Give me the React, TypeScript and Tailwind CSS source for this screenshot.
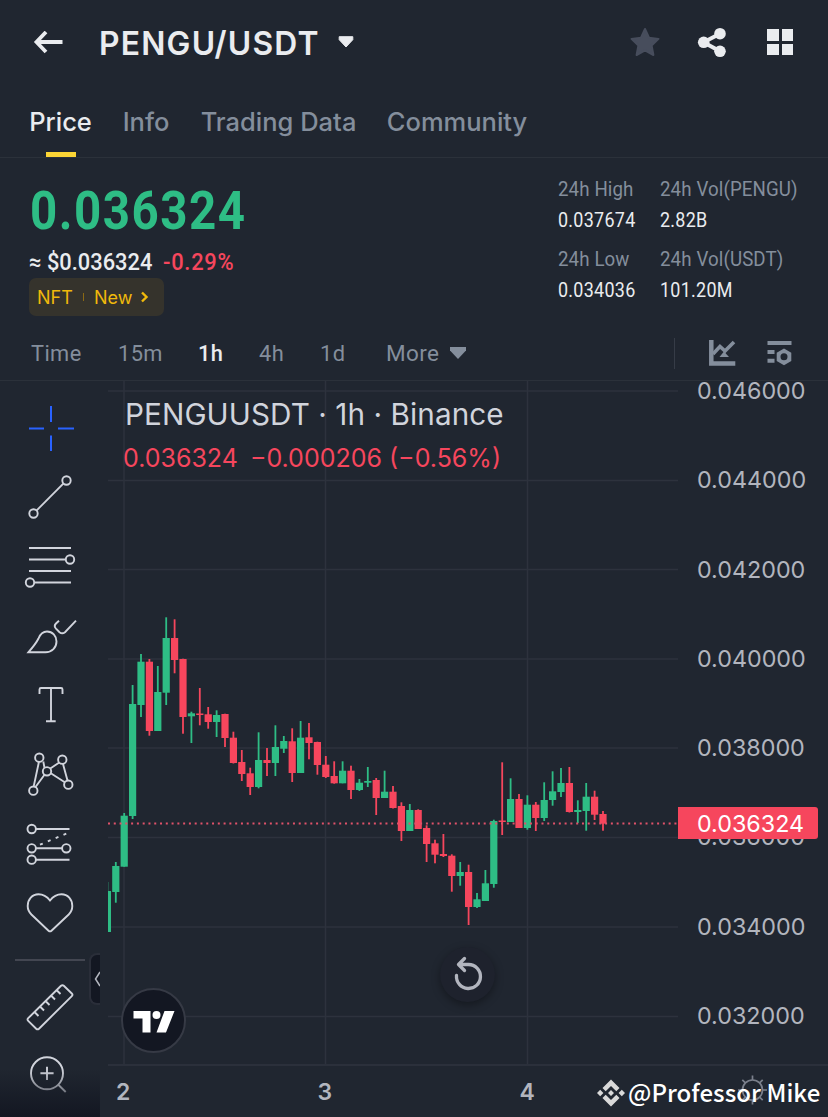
import type { ReactNode } from 'react'

type Candle = [high: number, top: number, bottom: number, low: number, up: 0 | 1]

const tabs = [
  { label: 'Price', width: 'w-[61px]', active: true },
  { label: 'Info', width: 'w-[50px]' },
  { label: 'Trading Data', width: 'w-[155px]' },
  { label: 'Community', width: 'w-[142px]' },
]

const stats = [
  { label: '24h High', value: '0.037674' },
  { label: '24h Vol(PENGU)', value: '2.82B' },
  { label: '24h Low', value: '0.034036' },
  { label: '24h Vol(USDT)', value: '101.20M' },
]

const intervals = [
  { label: 'Time', width: 'w-[87px]' },
  { label: '15m', width: 'w-[80px]' },
  { label: '1h', width: 'w-[61px]', active: true },
  { label: '4h', width: 'w-[61px]' },
  { label: '1d', width: 'w-[66px]' },
]

const prices = ['0.046000', '0.044000', '0.042000', '0.040000', '0.038000', '0.036000', '0.034000', '0.032000']
const gridY = [391, 480.5, 569.5, 659, 748, 837.5, 927, 1016.5]
const gridX = [124, 325.5, 527.5]

const candles: Candle[] = [
  [882, 891, 932, 932, 1],
  [862, 866, 892, 902.7, 1],
  [813, 815.7, 866.7, 866.7, 1],
  [685, 704, 816, 819, 1],
  [654, 661.7, 705, 717, 1],
  [659, 661.7, 731, 735.7, 0],
  [666, 692, 731, 731, 1],
  [617.3, 638, 692.7, 705, 1],
  [619.3, 638, 660, 673.3, 0],
  [658.7, 659, 717, 733.7, 0],
  [711.7, 713.3, 716.3, 743, 1],
  [688, 713.5, 715, 725.3, 0],
  [707, 714.3, 722, 728.7, 0],
  [710.3, 715, 722, 737, 1],
  [713.7, 714, 738, 747, 0],
  [731.7, 737.7, 763, 763.5, 0],
  [750, 762, 774, 781, 0],
  [767.7, 773.3, 787, 795, 0],
  [732.3, 760, 787, 788.3, 1],
  [748, 760, 763, 776, 0],
  [725.3, 747, 763, 776, 1],
  [736, 741, 748.7, 753, 1],
  [728.3, 741.3, 773, 782, 0],
  [721, 737.7, 773, 773, 1],
  [723, 737.3, 743, 759.3, 0],
  [741.7, 742, 765, 774.7, 0],
  [756, 764.7, 777, 778, 0],
  [761.3, 776, 783.3, 783.7, 0],
  [761.3, 770.7, 783.3, 783.3, 1],
  [765.7, 770.7, 790, 799, 0],
  [779, 782.7, 790, 791, 1],
  [767, 781, 782.7, 787, 1],
  [778, 780, 798, 815, 0],
  [770.7, 791.7, 798, 798, 1],
  [786, 791.7, 808, 808.5, 0],
  [802.3, 806, 831, 841, 0],
  [804, 810, 831, 831, 1],
  [809.3, 810, 829, 829, 0],
  [825.3, 828, 844, 862, 0],
  [839.7, 843.3, 854.7, 863.3, 0],
  [834, 854, 856, 857, 0],
  [854.3, 855.7, 876, 891.7, 0],
  [862, 872, 876, 885.7, 1],
  [864.7, 872, 907, 925, 0],
  [893, 899.3, 907, 908, 1],
  [870, 883.3, 901, 901, 1],
  [819.7, 821, 884, 887.7, 1],
  [762.3, 820.5, 822, 835, 0],
  [778.3, 799, 822, 822, 1],
  [794, 799, 828, 828, 0],
  [795.3, 804.7, 828, 829.7, 1],
  [802, 804.7, 818, 831, 0],
  [782.3, 800, 818, 821, 1],
  [771.3, 791.3, 800, 805.7, 1],
  [768, 783, 792, 797, 1],
  [767, 783, 812, 812.5, 0],
  [800.3, 810, 812, 823, 1],
  [783, 796.7, 811, 830.7, 1],
  [790.7, 796.7, 814.7, 820, 0],
  [811, 814, 823.7, 830.7, 0],
]

const tools: ReactNode[] = [
  <path stroke="#2962ff" strokeWidth="2" d="M51 12v16M51 41.500V57M29 34.500h15M58 34.500h16" />,
  <>
    <circle cx="66.500" cy="17.500" r="4.200" />
    <circle cx="33.500" cy="50.500" r="4.200" />
    <path d="M63.300 20.700 36.700 47.300" />
  </>,
  <>
    <path d="M29 16h42M29 27.500h36.500M29 39h42M34.500 50.500H71" />
    <circle cx="70" cy="27.500" r="4.200" />
    <circle cx="30" cy="50.500" r="4.200" />
  </>,
  <path d="M28.500 51.200C33 46 36.500 41.500 38.500 37.500 40.500 32.500 43 30.500 47 30.500c5.500 0 9.500 4.500 9.500 10 0 6-4.500 10.700-11 10.700ZM59 19.700l-3 2.800q-2.500 2.500 0 5.200l3.500 3.500q2.700 2.200 5.500 0L76 19.700" />,
  <path d="M39.500 24v-4.500q0-1.500 1.500-1.500h20q1.500 0 1.500 1.500V24M51 18v33.300M46 51.300h9.700" />,
  <>
    <path d="M38.900 23 33.700 47.400M43.300 22.500 44.500 28.800M35.500 48 44.500 35.800M50.300 29.500l9-6M50.800 34.300l14 9M63 25l4.500 16.500" />
    <circle cx="39.300" cy="18.700" r="4.200" />
    <circle cx="62.300" cy="20.700" r="4.200" />
    <circle cx="47" cy="32.300" r="4.200" />
    <circle cx="33.300" cy="51.700" r="4.200" />
    <circle cx="68.300" cy="45.700" r="4.200" />
  </>,
  <>
    <path d="M36 21h33.500M36 40.300h26M36 51.700h33.500" />
    <path strokeDasharray="3 5.500" d="M40 36.700l27-11.400" />
    <circle cx="31.700" cy="21" r="4.200" />
    <circle cx="31.700" cy="40.300" r="4.200" />
    <circle cx="66.300" cy="40.300" r="4.200" />
    <circle cx="31.700" cy="51.700" r="4.200" />
  </>,
  <path d="M50 23.500C46.500 19 43 17.300 38.500 17.300c-6.300 0-10.800 5-10.800 11.700 0 4 1.700 6.500 3.700 8.500L48.500 53.700q1.500 1.200 3 0L68.700 37.500c2-2 3.600-4.500 3.600-8.500 0-6.700-4.500-11.700-10.800-11.700-4.500 0-8 1.700-11.500 6.200Z" />,
]

const utilities: ReactNode[] = [
  <path d="M61 12.800q1.400-1.300 2.800 0l8 7.700q1.400 1.300 0 2.700L39 55.700q-1.400 1.300-2.800 0L28.200 47.900q-1.400-1.300 0-2.700ZM56.500 17l4 4M51 22.500l4 4M45.500 28l4 4M40 33.500l4 4M34.500 39l4 4" />,
  <path d="M63 31.300a16 16 0 1 1-32 0 16 16 0 1 1 32 0ZM47 24.700v13.200M40.400 31.300h13.200M58.300 42.800l7.400 7.200" />,
]

function Tool({ children }: { children: ReactNode }) {
  return (
    <svg className="h-[69px] w-[100px] shrink-0" viewBox="0 0 100 69" fill="none" stroke="#d1d4dc" strokeWidth="1.900">
      {children}
    </svg>
  )
}

function Header() {
  return (
    <header className="flex h-[86px] items-center">
      <svg className="ml-[32px] h-6 w-8" viewBox="0 0 32 24" fill="none" stroke="#eaecef" strokeWidth="3.800">
        <path d="M30.500 11H4.500M14 1 4.500 11l9.500 10" />
      </svg>
      <h1 className="ml-[35px] mt-[2px] w-[239px] origin-left scale-x-[0.965] whitespace-nowrap font-['Inter'] text-[33px] font-semibold tracking-[1.250px] text-[#eaecef]">
        PENGU/USDT
      </h1>
      <svg className="-mt-[2px] h-3 w-4" viewBox="0 0 16 12" fill="#eaecef">
        <path d="M1.200.7h13.600v3L8 11 1.200 3.700Z" stroke="#eaecef" strokeLinejoin="round" />
      </svg>
      <svg className="-mt-[2px] ml-[276px] h-8 w-8" viewBox="0 0 32 32" fill="#474d5c" stroke="#474d5c" strokeWidth="2" strokeLinejoin="round">
        <path d="m15 3 4 8.700 9.500 1.200-6.900 6.600 1.800 9.500-8.400-4.600L6.600 29l1.800-9.500L1.500 12.900l9.500-1.200Z" />
      </svg>
      <svg className="ml-[35px] h-8 w-8" viewBox="0 0 32 32" fill="#eaecef">
        <path d="M23 6.700 6.500 15.300 23 24.300" fill="none" stroke="#eaecef" strokeWidth="4" />
        <circle cx="6.700" cy="15.300" r="5.800" />
        <circle cx="23" cy="6.700" r="5.800" />
        <circle cx="23" cy="24.300" r="5.800" />
      </svg>
      <div className="-mt-[2px] ml-[38px] grid grid-cols-2 gap-[3px]">
        <i className="size-[11.5px] bg-[#eaecef]" />
        <i className="size-[11.5px] bg-[#eaecef]" />
        <i className="size-[11.5px] bg-[#eaecef]" />
        <i className="size-[11.5px] bg-[#eaecef]" />
      </div>
    </header>
  )
}

function Tabs() {
  return (
    <nav className="flex h-[72px] gap-[30px] border-b border-[#2b313a] pl-[30px] font-['Inter'] text-[25.500px] font-medium">
      {tabs.map((tab) => (
        <div key={tab.label} className={`flex flex-col items-center ${tab.width}`}>
          <span className={`mt-[17px] h-[37px] whitespace-nowrap leading-[37px] ${tab.active ? 'text-[#eaecef]' : 'text-[#848e9c]'}`}>
            {tab.label}
          </span>
          {tab.active && <i className="mt-[12px] h-[5px] w-[30px] bg-[#fcd535]" />}
        </div>
      ))}
    </nav>
  )
}

function Summary() {
  return (
    <section className="flex h-[168px] justify-between pl-[29px]">
      <div>
        <div className="ml-px mt-[22px] h-[62px] w-[230px] origin-left scale-x-[0.88] whitespace-nowrap font-['Roboto'] text-[54px] font-bold leading-[62px] tracking-[1.700px] text-[#2ebd85]">
          0.036324
        </div>
        <div className="mt-[6px] flex h-[30px] whitespace-nowrap font-['Roboto'] text-[23px] font-medium leading-[30px]">
          <span className="w-[134px] origin-left scale-x-[0.95] text-[#eaecef]">≈ $0.036324</span>
          <span className="origin-left scale-x-[0.95] tracking-[0.800px] text-[#f6465d]">-0.29%</span>
        </div>
        <div className="flex h-[38px] w-[135px] items-center rounded-[7px] bg-[#35332c] pl-2 font-['Inter'] text-[18px] text-[#f0b90b]">
          <span className="w-[46px]">NFT</span>
          <i className="mr-[10px] h-2 w-px bg-[#8b6914]" />
          <span className="w-[47px]">New</span>
          <svg className="h-3 w-2" viewBox="0 0 8 12" fill="none" stroke="#f0b90b" strokeWidth="2.400">
            <path d="m1 1.500 4.500 4.500L1 10.500" />
          </svg>
        </div>
      </div>
      <dl className="mt-[16px] grid h-[140px] w-[270px] grid-cols-[102px_1fr] font-['Roboto']">
        {stats.map((s) => (
          <div key={s.label} className="h-[69px] whitespace-nowrap">
            <dt className="h-[31px] origin-left scale-x-[0.96] text-[19.500px] leading-[31px] tracking-[0.100px] text-[#848e9c]">{s.label}</dt>
            <dd className="origin-left scale-x-[0.92] text-[19.500px] leading-[31px] tracking-[0.300px] text-[#eaecef]">{s.value}</dd>
          </div>
        ))}
      </dl>
    </section>
  )
}

function IntervalBar() {
  return (
    <div className="flex h-[55px] items-center border-b border-[#2b313a] pl-[31px] font-['Roboto'] text-[22.500px] tracking-[0.400px] text-[#848e9c]">
      {intervals.map((it) => (
        <span key={it.label} className={`origin-left scale-x-[0.97] pt-[2px] ${it.width} ${it.active ? 'font-medium text-[#eaecef]' : ''}`}>
          {it.label}
        </span>
      ))}
      <span className="w-[64px] pt-[2px]">More</span>
      <svg className="h-3 w-4" viewBox="0 0 16 12" fill="#848e9c">
        <path d="M0 0h16v3.500L8 12 0 3.500Z" />
      </svg>
      <i className="ml-[208px] h-[31px] w-px bg-[#363c47]" />
      <svg className="ml-[33px] h-7 w-7" viewBox="0 0 28 28" fill="none" stroke="#848e9c">
        <path strokeWidth="4.500" d="M3.300 1v23.500h24" />
        <path strokeWidth="3.600" d="M5 15 12 7.500l5 4.500 9-9" />
        <path fill="#848e9c" stroke="none" d="m16 12.500 5 5.500h-9.500Z" />
      </svg>
      <svg className="ml-[31px] h-7 w-7" viewBox="0 0 28 28" fill="#848e9c">
        <path d="M.5 2h24v4H.5ZM.5 11h7v4h-7ZM.5 19.700h7v4h-7Z" />
        <path fillRule="evenodd" d="m17 9.500 7.300 4.200v8.300L17 26.200 9.700 22v-8.300ZM17 14.300a3.500 3.500 0 1 0 0 7 3.500 3.500 0 0 0 0-7Z" />
      </svg>
    </div>
  )
}

function ToolRail() {
  return (
    <aside className="relative flex w-[100px] flex-col pt-[13px]">
      {tools.map((tool, i) => (
        <Tool key={i}>{tool}</Tool>
      ))}
      <div className="flex h-[27px] justify-center pt-[13px]">
        <i className="h-[2px] w-[70px] bg-[#434651]" />
      </div>
      {utilities.map((tool, i) => (
        <Tool key={i}>{tool}</Tool>
      ))}
      <div className="absolute bottom-0 left-0 h-12 w-full bg-gradient-to-b from-transparent to-[#131722]" />
      <div className="absolute right-0 top-[572px] flex h-[52px] w-[11px] items-center justify-end overflow-hidden rounded-l-lg border-2 border-r-0 border-[#2a2e39] bg-[#131722]">
        <svg className="h-4 w-[6px]" viewBox="0 0 6 16" fill="none" stroke="#b2b5be" strokeWidth="1.500">
          <path d="M6 1 1.500 8 6 15" />
        </svg>
      </div>
    </aside>
  )
}

function CandleChart() {
  return (
    <svg className="block h-[683px] w-[578px]" viewBox="100 381 578 683">
      <g stroke="#2d323d" strokeWidth="1.500">
        {gridY.map((y) => (
          <path key={y} d={`M108 ${y}H678`} />
        ))}
        {gridX.map((x) => (
          <path key={x} d={`M${x} 381V1064`} />
        ))}
      </g>
      <clipPath id="plot">
        <path d="M108 381h570v683H108Z" />
      </clipPath>
      <g clipPath="url(#plot)">
        {candles.map(([high, top, bottom, low, up], i) => {
          const x = 107.400 + i * 8.400
          return (
            <g key={i} fill={up ? '#2ebd85' : '#f6465d'}>
              <rect x={x - 0.900} y={high} width="1.800" height={low - high} />
              <rect x={x - 3.600} y={top} width="7.200" height={bottom - top} />
            </g>
          )
        })}
      </g>
      <path d="M108 823.500h570" stroke="#e0526a" strokeWidth="2" strokeDasharray="2 3.780" />
    </svg>
  )
}

function Legend() {
  return (
    <div className="absolute left-6 top-[13px] whitespace-nowrap font-['Inter']">
      <div className="ml-px h-10 text-[29.700px] leading-10 tracking-[0.070px] text-[#d1d4dc]">PENGUUSDT · 1h · Binance</div>
      <div className="-ml-px mt-[6px] flex h-9 gap-3 text-[25px] leading-9 text-[#f6465d]">
        <span>0.036324</span>
        <span>−0.000206 (−0.56%)</span>
      </div>
    </div>
  )
}

function PriceAxis() {
  return (
    <div className="relative flex h-[683px] w-[150px] flex-col gap-[69.300px] pl-[19px] font-['Inter'] text-[23.300px] leading-5 text-[#b2b5be]">
      {prices.map((p) => (
        <span key={p} className="h-5">{p}</span>
      ))}
      <div className="absolute left-0 top-[426px] h-8 w-[140px] rounded-r-[3px] bg-[#f6465d] pl-[19px] leading-[33px] text-white">
        0.036324
      </div>
    </div>
  )
}

function TimeAxis() {
  return (
    <div className="relative ml-2 flex h-[53px] border-t-2 border-[#2b303b] font-['Inter'] text-[23px] font-semibold leading-[53px] text-[#b2b5be]">
      <span className="ml-2 w-[201.500px]">2</span>
      <span className="w-[202px]">3</span>
      <span>4</span>
      <svg className="absolute left-[628px] top-[8px] h-8 w-8" viewBox="0 0 32 32" fill="none" stroke="#7b808c" strokeWidth="1.700">
        <circle cx="16.500" cy="16" r="10" />
        <path d="M16.500 1.500V6M16.500 26v4.500M2 16h4.500M26.500 16H31M6.300 5.800l3.100 3.100M23.600 23.100l3.100 3.100M6.300 26.200l3.100-3.100M23.600 8.900l3.100-3.100" />
      </svg>
      <div className="absolute left-[489px] top-[3px] flex items-center whitespace-nowrap font-['Noto_Sans_CJK_SC'] text-[24px] font-medium text-white">
        <svg className="mr-[3px] h-7 w-7" viewBox="0 0 28 28" fill="#d9d9d9">
          <path d="m14 .5 8.500 8.500-3.200 3.200L14 7l-5.300 5.200L5.500 9ZM14 27.500l8.500-8.500-3.200-3.200L14 21l-5.300-5.200L5.500 19ZM14 11l3 3-3 3-3-3ZM3.200 10.800 6.400 14l-3.200 3.200L0 14ZM24.800 10.800 28 14l-3.200 3.200-3.200-3.200Z" />
        </svg>
        <span className="-mt-[2px] h-[50px] leading-[50px] tracking-[0.060px]">@Professor Mike</span>
      </div>
    </div>
  )
}

export default function App() {
  return (
    <main className="flex h-[1117px] w-[828px] flex-col overflow-hidden bg-[#202630] font-['Inter',sans-serif]">
      <Header />
      <Tabs />
      <Summary />
      <IntervalBar />
      <div className="flex h-[736px]">
        <ToolRail />
        <div className="w-[728px]">
          <div className="relative flex">
            <CandleChart />
            <PriceAxis />
            <Legend />
            <button className="absolute left-[340px] top-[566px] flex size-[55px] items-center justify-center rounded-full bg-[#1e222d] shadow-[0_3px_8px_rgba(0,0,0,0.35)]">
              <svg className="-mt-px size-9" viewBox="0 0 36 36" fill="none" stroke="#b2b5be" strokeWidth="3.300" strokeLinecap="round" strokeLinejoin="round">
                <path d="M6.500 19.500A12 12 0 1 0 18.500 8.500H8.500M14.500 2.500l-6 6 6 6" />
              </svg>
            </button>
            <div className="absolute left-[21px] top-[607px] flex size-[65px] items-center justify-center rounded-full border-2 border-[#363a45] bg-[#131722]">
              <svg className="mt-[2px] h-[22px] w-[42px]" viewBox="0 0 42 22" fill="#fff">
                <path d="M.5 0h17v21.500h-8v-14h-9ZM31.500 0h10L33 21.500H23.500Z" />
                <circle cx="23.500" cy="4" r="4" />
              </svg>
            </div>
          </div>
          <TimeAxis />
        </div>
      </div>
    </main>
  )
}
